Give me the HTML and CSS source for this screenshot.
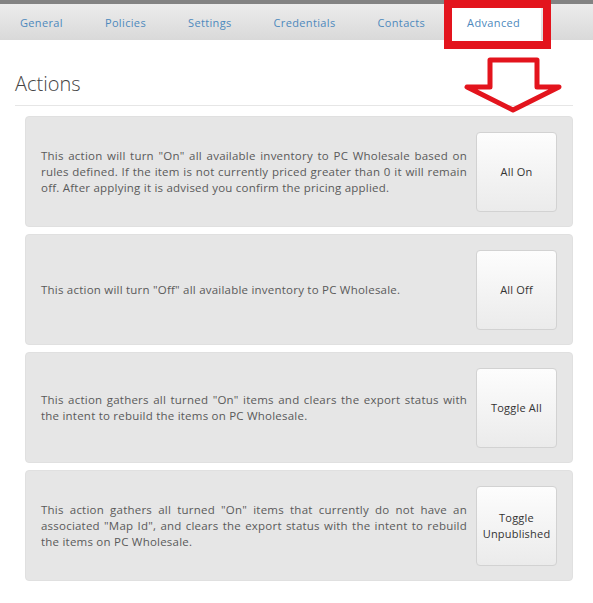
FILE: index.html
```html
<!DOCTYPE html>
<html>
<head>
<meta charset="utf-8">
<link rel="stylesheet" href="styles.css">
</head>
<body>
<div class="page">
  <div class="topbar"></div>
  <nav class="tabs">
    <a class="tab">General</a>
    <a class="tab">Policies</a>
    <a class="tab">Settings</a>
    <a class="tab">Credentials</a>
    <a class="tab">Contacts</a>
    <a class="tab active">Advanced</a>
  </nav>
  <div class="highlight"></div>
  <svg class="arrow" width="110" height="70" viewBox="0 0 110 70">
    <path d="M27 5 H74 V32 H96 L50 55 L4 32 H27 Z" fill="none" stroke="#e3141d" stroke-width="5" stroke-linejoin="round"/>
  </svg>
  <main class="content">
    <h2 class="title">Actions</h2>
    <div class="cards">
      <div class="card">
        <p class="desc">This action will turn "On" all available inventory to PC Wholesale based on rules defined. If the item is not currently priced greater than 0 it will remain off. After applying it is advised you confirm the pricing applied.</p>
        <button class="btn">All On</button>
      </div>
      <div class="card">
        <p class="desc">This action will turn "Off" all available inventory to PC Wholesale.</p>
        <button class="btn">All Off</button>
      </div>
      <div class="card">
        <p class="desc">This action gathers all turned "On" items and clears the export status with the intent to rebuild the items on PC Wholesale.</p>
        <button class="btn">Toggle All</button>
      </div>
      <div class="card">
        <p class="desc">This action gathers all turned "On" items that currently do not have an associated "Map Id", and clears the export status with the intent to rebuild the items on PC Wholesale.</p>
        <button class="btn">Toggle Unpublished</button>
      </div>
    </div>
  </main>
</div>
</body>
</html>
```
FILE: styles.css
```css
* { box-sizing: border-box; }
html, body { margin: 0; padding: 0; background: #fff; }
body { font-family: "Open Sans", "Liberation Sans", sans-serif; }
.page { position: relative; width: 593px; height: 603px; overflow: hidden; }
.topbar { height: 4px; background: #838383; }
.tabs {
  display: flex;
  height: 36px;
  background: linear-gradient(#ececec, #d9d9d9);
}
.tab {
  display: flex;
  align-items: center;
  padding: 0 21px;
  font-size: 11px;
  letter-spacing: 0.35px;
  color: #4d89bd;
}
.tab:first-child { padding-left: 20px; }
.tab.active { background: #fff; }
.highlight {
  position: absolute;
  left: 444px;
  top: 0;
  width: 107px;
  height: 49px;
  border: 8px solid #e3141d;
}
.arrow {
  position: absolute;
  left: 463px;
  top: 55px;
}
.content { padding: 0 20px 0 15px; }
.title {
  margin: 31px 0 0;
  padding-bottom: 9px;
  border-bottom: 1px solid #e6e6e6;
  font-size: 20px;
  font-weight: 300;
  color: #444;
  line-height: 25px;
}
.cards {
  display: flex;
  flex-direction: column;
  gap: 7px;
  margin: 10px 0 0 10px;
}
.card {
  display: flex;
  align-items: center;
  gap: 9px;
  height: 111px;
  padding: 0 15px 0 15px;
  background: #e6e6e6;
  border: 1px solid #e0e0e0;
  border-radius: 4px;
}
.desc {
  flex: 1;
  margin: 0;
  font-size: 11.5px;
  letter-spacing: 0.22px;
  line-height: 16px;
  color: #5a5a5a;
  text-align: justify;
}
.btn {
  flex: none;
  width: 81px;
  height: 80px;
  margin-top: 1px;
  padding: 0 4px;
  border: 1px solid #d2d2d2;
  border-radius: 4px;
  background: linear-gradient(#fdfdfd, #ebebeb);
  font-family: inherit;
  font-size: 11px;
  letter-spacing: 0.2px;
  line-height: 16px;
  color: #333;
}
```
